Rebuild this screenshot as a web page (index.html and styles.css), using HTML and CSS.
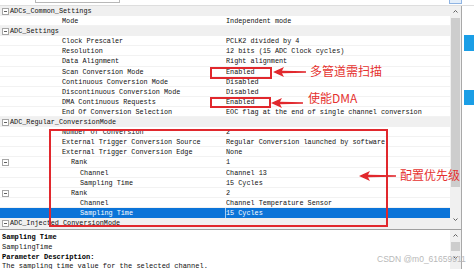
FILE: index.html
```html
<!DOCTYPE html>
<html>
<head>
<meta charset="utf-8">
<link rel="stylesheet" href="styles.css">
</head>
<body>
<div class="screen">
  <div class="topbar"><div class="search"></div><div class="topbtn"></div></div>
  <div class="body">
    <div class="leftcol">
      <div class="table">
        <div class="rows">
          <div class="row group"><span class="tog"></span><span class="glabel">ADCs_Common_Settings</span></div>
          <div class="row"><span></span><span class="lab l1">Mode</span><span class="val">Independent mode</span></div>
          <div class="row group"><span class="tog"></span><span class="glabel">ADC_Settings</span></div>
          <div class="row"><span></span><span class="lab l1">Clock Prescaler</span><span class="val">PCLK2 divided by 4</span></div>
          <div class="row"><span></span><span class="lab l1">Resolution</span><span class="val">12 bits (15 ADC Clock cycles)</span></div>
          <div class="row"><span></span><span class="lab l1">Data Alignment</span><span class="val">Right alignment</span></div>
          <div class="row"><span></span><span class="lab l1">Scan Conversion Mode</span><span class="val">Enabled</span></div>
          <div class="row"><span></span><span class="lab l1">Continuous Conversion Mode</span><span class="val">Disabled</span></div>
          <div class="row"><span></span><span class="lab l1">Discontinuous Conversion Mode</span><span class="val">Disabled</span></div>
          <div class="row"><span></span><span class="lab l1">DMA Continuous Requests</span><span class="val">Enabled</span></div>
          <div class="row"><span></span><span class="lab l1">End Of Conversion Selection</span><span class="val">EOC flag at the end of single channel conversion</span></div>
          <div class="row group"><span class="tog"></span><span class="glabel">ADC_Regular_ConversionMode</span></div>
          <div class="row"><span></span><span class="lab l1">Number Of Conversion</span><span class="val">2</span></div>
          <div class="row"><span></span><span class="lab l1">External Trigger Conversion Source</span><span class="val">Regular Conversion launched by software</span></div>
          <div class="row"><span></span><span class="lab l1">External Trigger Conversion Edge</span><span class="val">None</span></div>
          <div class="row"><span class="tog"></span><span class="lab l2">Rank</span><span class="val">1</span></div>
          <div class="row"><span></span><span class="lab l3">Channel</span><span class="val">Channel 13</span></div>
          <div class="row"><span></span><span class="lab l3">Sampling Time</span><span class="val">15 Cycles</span></div>
          <div class="row"><span class="tog"></span><span class="lab l2">Rank</span><span class="val">2</span></div>
          <div class="row"><span></span><span class="lab l3">Channel</span><span class="val">Channel Temperature Sensor</span></div>
          <div class="row sel"><span></span><span class="lab l3">Sampling Time</span><span class="val">15 Cycles</span></div>
          <div class="row group"><span class="tog"></span><span class="glabel">ADC_Injected_ConversionMode</span></div>
        </div>
        <div class="vscroll">
          <div class="sarrow"><svg width="5" height="3" viewBox="0 0 5 3"><polyline points="0.5,2.5 2.5,0.5 4.5,2.5" fill="none" stroke="#606060" stroke-width="1"/></svg></div>
          <div class="thumb big"></div>
          <div class="spacer"></div>
          <div class="sarrow bottom"><svg width="5" height="3" viewBox="0 0 5 3"><polyline points="0.5,0.5 2.5,2.5 4.5,0.5" fill="none" stroke="#606060" stroke-width="1"/></svg></div>
        </div>
      </div>
      <div class="band"></div>
      <div class="desc">
        <div class="desc-text">
          <div class="b">Sampling Time</div>
          <div>SamplingTime</div>
          <div class="b">Parameter Description:</div>
          <div class="cut">The sampling time value for the selected channel.</div>
        </div>
        <div class="vscroll small">
          <div class="sarrow"><svg width="5" height="3" viewBox="0 0 5 3"><polyline points="0.5,2.5 2.5,0.5 4.5,2.5" fill="none" stroke="#606060" stroke-width="1"/></svg></div>
          <div class="thumb tiny"></div>
          <div class="sarrow"><svg width="5" height="3" viewBox="0 0 5 3"><polyline points="0.5,0.5 2.5,2.5 4.5,0.5" fill="none" stroke="#606060" stroke-width="1"/></svg></div>
        </div>
      </div>
    </div>
    <div class="side">
      <div class="blue b1"></div>
      <div class="blue b2"></div>
    </div>
  </div>

  <div class="rbox rbox1"></div>
  <div class="rbox rbox2"></div>
  <div class="rbox rbox3"></div>

  <svg class="arrow a1" width="33" height="10" viewBox="0 0 33 10"><polygon points="0,5 11,0 9,3.8 33,4.3 33,5.7 9,6.2 11,10" fill="#e1282d"/></svg>
  <svg class="arrow a2" width="32" height="10" viewBox="0 0 32 10"><polygon points="0,5 11,0 9,3.8 32,4.3 32,5.7 9,6.2 11,10" fill="#e1282d"/></svg>
  <svg class="arrow a3" width="37" height="10" viewBox="0 0 37 10"><polygon points="0,5 11,0 9,3.8 37,4.3 37,5.7 9,6.2 11,10" fill="#e1282d"/></svg>

  <div class="note n1">多管道需扫描</div>
  <div class="note n2">使能DMA</div>
  <div class="note n3">配置优先级</div>

  <div class="watermark">CSDN @m0_61659911</div>
</div>
</body>
</html>
```

FILE: styles.css
```css
body {
  margin: 0;
  background: #fff;
}

.screen {
  position: relative;
  width: 474px;
  height: 269px;
  overflow: hidden;
  background: #fff;
  display: flex;
  flex-direction: column;
  font-family: "Liberation Mono", "DejaVu Sans Mono", monospace;
}

.topbar {
  height: 6px;
  flex: none;
  display: flex;
  align-items: flex-start;
  box-sizing: border-box;
  border-bottom: 1px solid #dedede;
}

.search {
  margin-left: 35px;
  width: 83px;
  height: 2px;
  border: 1px solid #b8b8b8;
  border-top: none;
}

.topbtn {
  margin-left: auto;
  margin-right: 12px;
  width: 11px;
  height: 3px;
  border: 1px solid #8fb4e3;
  border-top: none;
  background: #e3eefa;
}

.body {
  flex: 1;
  display: flex;
  min-height: 0;
}

.leftcol {
  width: 462px;
  flex: none;
  display: flex;
  flex-direction: column;
}

.table {
  height: 221px;
  flex: none;
  display: flex;
  overflow: hidden;
  border-right: 1px solid #a8a8a8;
}

.rows {
  width: 450px;
  flex: none;
  overflow: hidden;
}

.row {
  display: grid;
  grid-template-columns: 10px 215px 1fr;
  height: 10.1px;
  line-height: 10.1px;
  font-size: 6.8px;
  color: #111;
  white-space: nowrap;
  box-shadow: inset 0 -1px 0 #f2f2f2;
}

.row.group {
  background: #f0f0f0;
  box-shadow: none;
}

.glabel {
  grid-column: 2 / 4;
}

.lab {
  overflow: hidden;
}

.l1 { padding-left: 52px; }
.l2 { padding-left: 61px; }
.l3 { padding-left: 70px; }

.val {
  border-left: 1px solid transparent;
  overflow: hidden;
}

.row.sel {
  background: #0b74d8;
  color: #fff;
  box-shadow: none;
}

.row.sel .val {
  border-left-color: #a9cbf0;
}

.tog {
  position: relative;
  width: 5px;
  height: 5px;
  margin: 2px 0 0 2px;
  border: 1px solid #a6a6a6;
  background: #fff;
}

.tog::after {
  content: "";
  position: absolute;
  left: 1px;
  right: 1px;
  top: 2px;
  height: 1px;
  background: #606060;
}

.vscroll {
  width: 11px;
  flex: none;
  background: #f0f0f0;
  display: flex;
  flex-direction: column;
}

.sarrow {
  height: 11px;
  flex: none;
  display: flex;
  align-items: center;
  justify-content: center;
}

.sarrow.bottom {
  margin-bottom: 2px;
}

.thumb {
  margin: 1px 1px 0 1px;
  background: #cdcdcd;
  flex: none;
}

.thumb.big { height: 169px; }
.thumb.tiny { height: 9px; margin-bottom: 1px; }

.spacer { flex: 1; }

.band {
  height: 2px;
  flex: none;
  background: #f0f0f0;
  border-right: 1px solid #a8a8a8;
}

.desc {
  flex: 1;
  display: flex;
  border-top: 1px solid #a0a0a0;
  border-right: 1px solid #a8a8a8;
  background: #fff;
  min-height: 0;
}

.desc-text {
  width: 448px;
  padding: 2px 0 0 2px;
  font-size: 7px;
  line-height: 10px;
  color: #111;
  white-space: nowrap;
  overflow: hidden;
}

.desc-text .b {
  font-weight: bold;
  color: #000;
}

.desc-text .cut {
  line-height: 9px;
}

.side {
  flex: 1;
  background: #fff;
  display: flex;
  flex-direction: column;
}

.blue {
  margin-left: 2px;
  background: #1a9ee6;
}

.b1 { margin-top: 29px; height: 16px; }
.b2 { margin-top: 39px; height: 15px; }

.rbox {
  position: absolute;
  box-sizing: border-box;
  border: 2px solid #e1282d;
}

.rbox1 { left: 210px; top: 67px; width: 62px; height: 12px; }
.rbox2 { left: 210px; top: 97px; width: 61px; height: 11px; }
.rbox3 { left: 49px; top: 129px; width: 339px; height: 98px; }

.arrow {
  position: absolute;
}

.a1 { left: 273px; top: 67px; }
.a2 { left: 271px; top: 98px; }
.a3 { left: 359px; top: 171px; }

.note {
  position: absolute;
  font-family: "Noto Sans CJK SC", "Noto Sans", sans-serif;
  font-size: 12px;
  line-height: 14px;
  color: #e5322f;
  white-space: nowrap;
}

.n1 { left: 310px; top: 64px; }
.n2 { left: 308px; top: 91px; }
.n3 { left: 400px; top: 168px; }

.watermark {
  position: absolute;
  left: 377px;
  top: 254px;
  font-family: "Liberation Sans", Arial, sans-serif;
  font-size: 8.5px;
  line-height: 10px;
  color: #b9b9b9;
  white-space: nowrap;
}
```
